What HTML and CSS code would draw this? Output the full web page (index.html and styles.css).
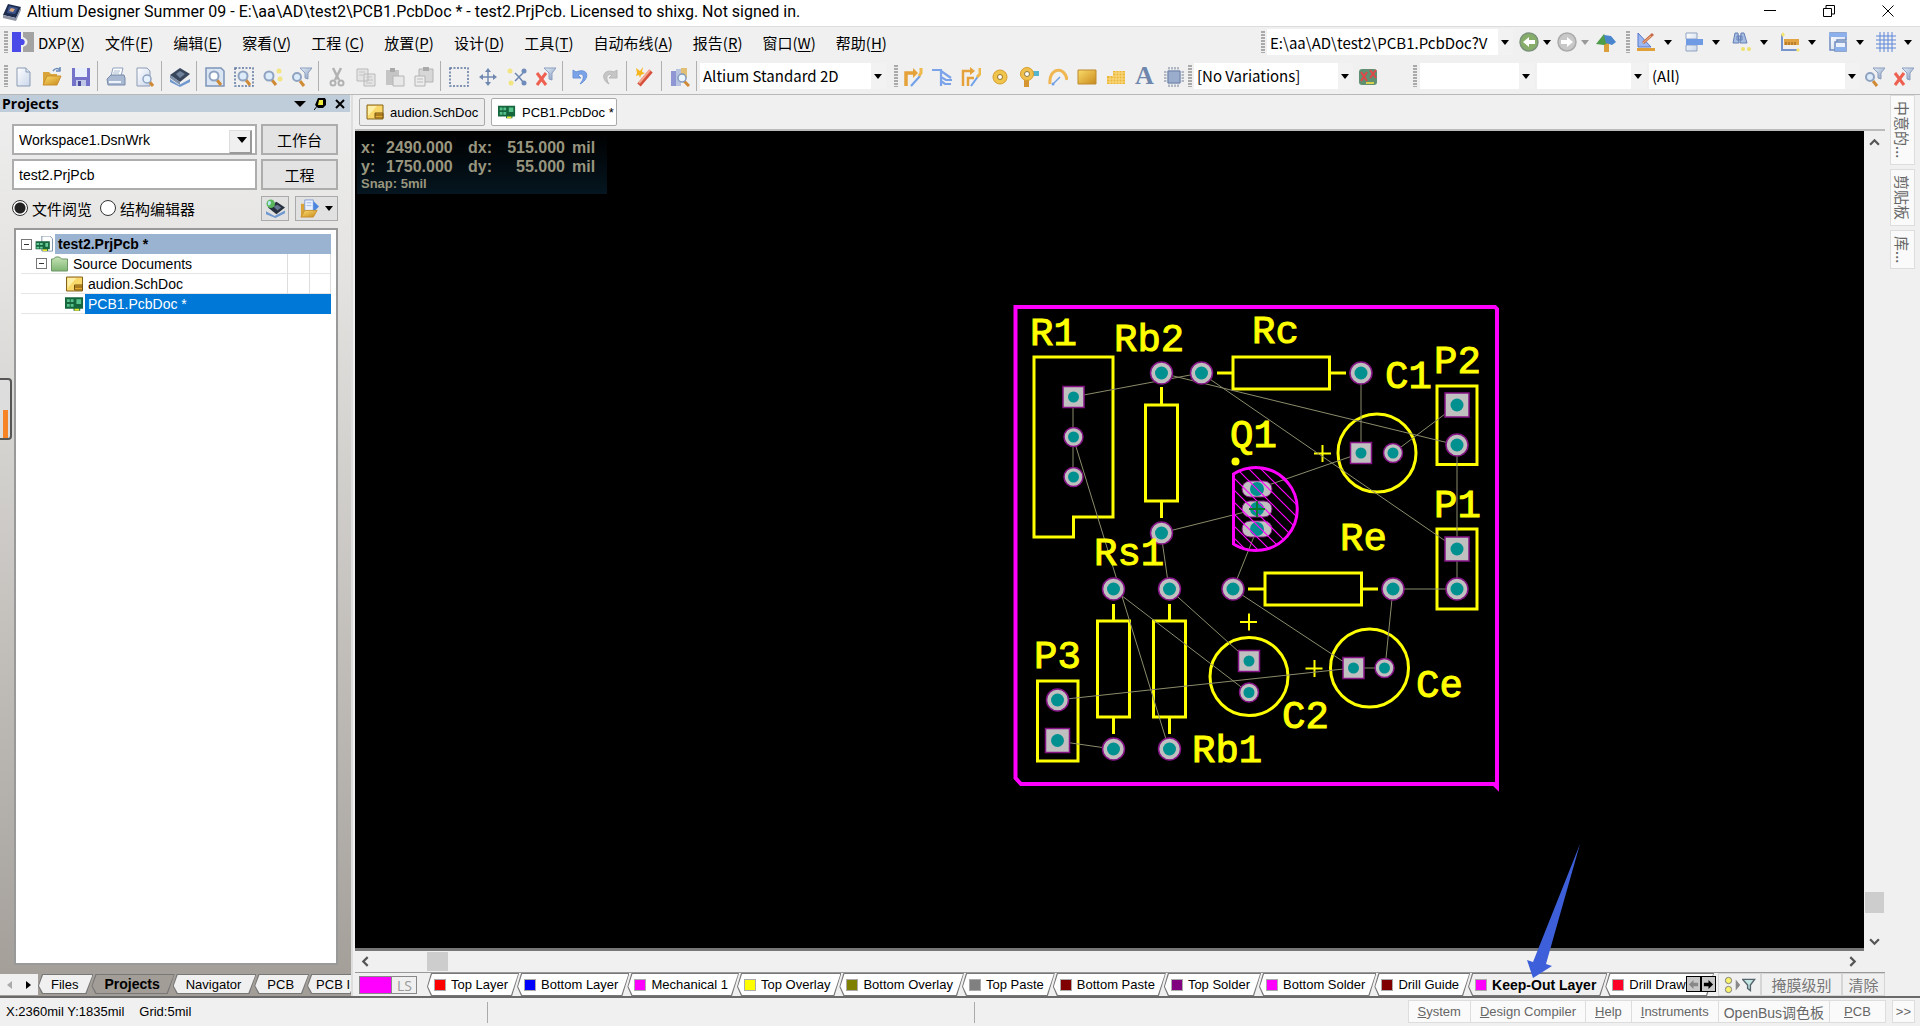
FILE: index.html
```html
<!DOCTYPE html>
<html lang="zh-CN">
  <head>
    <meta charset="UTF-8" />
    <meta name="viewport" content="width=device-width, initial-scale=1.0" />
    <title>Altium Designer Summer 09</title>
    <link rel="stylesheet" href="styles.css">
  </head>
  <body>
    <!-- shared icons -->
    <svg class="sprite" aria-hidden="true">
      <defs>
        <linearGradient id="gold" x2="1" y2="1"><stop offset="0" stop-color="#fbdc6a" /><stop offset="1" stop-color="#c98a1c" /></linearGradient>
        <linearGradient id="steel" x2="1" y2="1"><stop offset="0" stop-color="#e8f0fa" /><stop offset="1" stop-color="#8299bd" /></linearGradient>
        <linearGradient id="paper" x2="1" y2="1"><stop offset="0" stop-color="#fff" /><stop offset="1" stop-color="#c9d6ea" /></linearGradient>
        <linearGradient id="leaf" x2="0" y2="1"><stop offset="0" stop-color="#c5e3b4" /><stop offset="1" stop-color="#7fb573" /></linearGradient>
      </defs>
      <symbol id="i-app" viewBox="0 0 20 20"><path d="M1 13 6 2l13 3-5 11z" fill="#1e2c50" /><path d="m7 4 9 2-3 6-8-1z" fill="#3e568c" /><path d="m9 6 4 1-2 3-4-1z" fill="#dba982" /><path d="m1 13 13 3 5-11v3l-5 11L1 16z" fill="#8d93a3" /></symbol>
      <symbol id="i-dxp" viewBox="0 0 22 20"><path d="M0 0h9v7c5-1 5 7 0 6v7H0z" fill="#4a4ae8" /><path d="M11 0h11v20H11v-5c6-2 6-8 0-10z" fill="#a3a3a3" /></symbol>
      <symbol id="i-new" viewBox="0 0 20 20"><path d="M4 1h9l4 4v14H4z" fill="url(#paper)" stroke="#8b9ab3" /><path d="M13 1v4h4" fill="#dfe7f2" stroke="#8b9ab3" /></symbol>
      <symbol id="i-open" viewBox="0 0 20 20"><path d="M1 5h6l2 2h6v11H1z" fill="#d9a53a" /><path d="m1 18 4-9h14l-4 9z" fill="url(#gold)" stroke="#c98f2c" /><path d="M11 4c2-3 5-3 7-1V0m0 4h-4" fill="none" stroke="#6687b8" stroke-width="1.5" /></symbol>
      <symbol id="i-docs" viewBox="0 0 20 20"><path d="M1 5h5v14H1z" fill="#d9a53a" /><path d="M5 1h9v12H5z" fill="#eaf2ff" stroke="#7f9fd6" /><path d="M7 4h5M7 7h5" stroke="#9bb6e6" /><path d="m14 2 6 6-6 6z" fill="#4a86e0" /><path d="m1 19 4-7h13l-4 7z" fill="url(#gold)" stroke="#c98f2c" /></symbol>
      <symbol id="i-save" viewBox="0 0 20 20"><path d="M1 1h18v18H1z" fill="#7473c9" /><path d="M4 1h12v9H4z" fill="#e8eefb" /><path d="M5 13h10v6H5z" fill="#bfc7e6" /><path d="M7 14h3v5H7z" fill="#4d4c9d" /></symbol>
      <symbol id="i-print" viewBox="0 0 20 20"><path d="m5 9 2-8h10l-2 8z" fill="#fff" stroke="#8da0bf" /><path d="m1 12 4-4h13l1 3v7H2z" fill="#a9b9d2" stroke="#7588a7" /><path d="M3 14h12v2H3z" fill="#eef3fa" /><path d="M8 4h6M7 6h6" stroke="#a9b9d2" /></symbol>
      <symbol id="i-preview" viewBox="0 0 20 20"><path d="M2 1h10l3 3v15H2z" fill="url(#paper)" stroke="#8b9ab3" /><path d="m14 14 4 5" stroke="#d08a34" stroke-width="3" /><circle cx="12" cy="12" r="4" fill="#e5f1fc" stroke="#8fa3c1" stroke-width="1.5" /></symbol>
      <symbol id="i-device" viewBox="0 0 20 20"><path d="m0 12 9 6 11-6v3l-10 5-10-5z" fill="#6f98cf" /><path d="m0 8 10-7 10 6-10 8z" fill="#38475c" /><path d="m6 7 4-3 5 3-5 4z" fill="#71839c" /><path d="m0 8 10 7v3L0 11z" fill="#7d8ea8" /></symbol>
      <symbol id="i-compile" viewBox="0 0 20 20"><path d="m0 13 9 5 11-6v3l-10 5-10-4z" fill="#6f98cf" /><path d="m2 9 9-6 9 6-9 7z" fill="#26303f" /><path d="m8 8 4-2 4 3-4 3z" fill="#66778f" /><circle cx="5" cy="5" r="4.500" fill="#5cb65c" /><path d="M2 3c2-2 4 0 3 2s-2 2-3 1z" fill="#b6e6f5" /></symbol>
      <symbol id="i-fit" viewBox="0 0 20 20"><path d="M1 1h15l3 3v15H1z" fill="#dbe6f5" stroke="#7e94b8" stroke-width="1.5" /><path d="m12 13 4 5" stroke="#d08a34" stroke-width="3" /><circle cx="9" cy="9" r="4.500" fill="#fff" stroke="#8fa3c1" stroke-width="2" /></symbol>
      <symbol id="i-area" viewBox="0 0 20 20"><path d="M1 1h18v18H1z" fill="none" stroke="#5c749e" stroke-width="1.500" stroke-dasharray="2 1.500" /><path d="m12 13 4 5" stroke="#d08a34" stroke-width="3" /><circle cx="9" cy="9" r="4.500" fill="#dcecfb" stroke="#8fa3c1" stroke-width="2" /></symbol>
      <symbol id="i-zoomsel" viewBox="0 0 20 20"><path d="m9 13 4 5" stroke="#d08a34" stroke-width="3" /><circle cx="6" cy="9" r="4.500" fill="#dcecfb" stroke="#8fa3c1" stroke-width="2" /><circle cx="16" cy="4" r="2.500" fill="#f3e482" /><circle cx="17" cy="12" r="2.500" fill="#f3e482" /></symbol>
      <symbol id="i-zoomfilter" viewBox="0 0 20 20"><path d="m8 14 4 5" stroke="#d08a34" stroke-width="3" /><circle cx="5" cy="10" r="4" fill="#dcecfb" stroke="#8fa3c1" stroke-width="2" /><path d="M8 1h12l-4 5v6l-3-1V6z" fill="url(#steel)" stroke="#8c9fbe" /></symbol>
      <symbol id="i-cut" viewBox="0 0 20 20"><path d="m6 1 6 12M14 1 8 13" stroke="#b2b2b2" stroke-width="2.500" /><circle cx="6" cy="16" r="2.500" fill="none" stroke="#b2b2b2" stroke-width="2" /><circle cx="14" cy="16" r="2.500" fill="none" stroke="#b2b2b2" stroke-width="2" /></symbol>
      <symbol id="i-copy" viewBox="0 0 20 20"><path d="M1 2h11v12H1zM8 7h11v12H8z" fill="#e4e4e4" stroke="#bababa" /><path d="M3 5h6M3 8h4M10 10h6M10 13h7M10 16h6" stroke="#c4c4c4" /></symbol>
      <symbol id="i-paste" viewBox="0 0 20 20"><path d="M1 3h13v15H1z" fill="#c5c5c5" /><path d="M5 1h5v4H5z" fill="#a9a9a9" /><path d="M8 9h11v10H8z" fill="#e8e8e8" stroke="#b5b5b5" /></symbol>
      <symbol id="i-pastearr" viewBox="0 0 20 20"><path d="M5 2h14v13H5z" fill="#d7d7d7" stroke="#b4b4b4" /><path d="M9 0h6v4H9z" fill="#aaa" /><path d="M1 9h10v10H1z" fill="#ececec" stroke="#b4b4b4" /><path d="M3 12h6M3 15h6" stroke="#bbb" /></symbol>
      <symbol id="i-marquee" viewBox="0 0 20 20"><path d="M1 1h18v18H1z" fill="none" stroke="#5c749e" stroke-width="1.500" stroke-dasharray="2 1.500" /></symbol>
      <symbol id="i-move" viewBox="0 0 20 20"><path d="M10 3v14M3 10h14" stroke="#7088b0" stroke-width="1.500" /><path d="m10 1 3 4H7zM10 19l3-4H7zM1 10l4-3v6zM19 10l-4-3v6z" fill="#7088b0" /></symbol>
      <symbol id="i-nodes" viewBox="0 0 20 20"><path d="m8 6 4 4-4 4M16 6l-4 4 4 5" fill="none" stroke="#6c86b0" stroke-width="1.500" /><circle cx="3" cy="4" r="2.500" fill="#f3e482" /><circle cx="4" cy="16" r="2.500" fill="#f3e482" /><circle cx="17" cy="4" r="2.500" fill="#6f8cba" /><circle cx="17" cy="16" r="2.500" fill="#6f8cba" /></symbol>
      <symbol id="i-clear" viewBox="0 0 20 20"><path d="M8 1h12l-4 5v7l-3-1V6z" fill="url(#steel)" stroke="#8c9fbe" /><path d="m1 6 9 12M10 6 1 18" stroke="#ee6151" stroke-width="3" /></symbol>
      <symbol id="i-undo" viewBox="0 0 20 20"><path d="M2 3v8h8L7 8c5-3 8 2 2 9 10-5 9-17-4-12z" fill="#7ba3ea" stroke="#6a92d8" /></symbol>
      <symbol id="i-redo" viewBox="0 0 20 20"><path d="M17 3v8H9l3-3c-5-2-7 3-3 9C0 12 3 1 14 5z" fill="#c6c6c6" stroke="#b7b7b7" /></symbol>
      <symbol id="i-brush" viewBox="0 0 20 20"><path d="M4 18 16 4" stroke="#d6503c" stroke-width="4.500" /><path d="m4 16 11-13" stroke="#f3a88f" stroke-width="2" /><path d="m1 1 4 3 3-4-1 5 3 1-4 2-1 3-1-3-3 1 1-3z" fill="#f5b51f" /></symbol>
      <symbol id="i-browse" viewBox="0 0 20 20"><path d="M1 4h5v15H1z" fill="#8e97d4" /><path d="M6 2h5v17H6z" fill="#b8c3df" /><path d="M11 1h6v10h-6z" fill="#e1c075" /><path d="m14 14 5 5" stroke="#d08a34" stroke-width="3" /><circle cx="12" cy="11" r="4" fill="#eaf5ff" stroke="#8199bf" stroke-width="1.500" /></symbol>
      <symbol id="i-route" viewBox="0 0 20 20"><path d="M3 19V6h8" fill="none" stroke="#e5a23a" stroke-width="3.500" /><path d="m10 1 5 5-5 5z" fill="#e5a23a" /><path d="m8 19 9-10" stroke="#6fa0e8" stroke-width="2" /><path d="M18 1v5l-2 3" fill="none" stroke="#f0b94c" stroke-width="3" /></symbol>
      <symbol id="i-bus" viewBox="0 0 20 20"><path d="M0 3h9v16M9 4l10 7M9 10l5 3h6M9 14l4 3h6" fill="none" stroke="#7ba3ea" stroke-width="2.200" /></symbol>
      <symbol id="i-diff" viewBox="0 0 20 20"><path d="M2 19V4h9M7 19v-8h6" fill="none" stroke="#e5a23a" stroke-width="2.500" /><path d="m9 0 5 4-5 4z" fill="#e5a23a" /><path d="m10 19 8-11" stroke="#6fa0e8" stroke-width="2" /><path d="M19 1v6l-3 3" fill="none" stroke="#f0b94c" stroke-width="3" /></symbol>
      <symbol id="i-pad" viewBox="0 0 20 20"><circle cx="10" cy="10" r="7" fill="#efc64b" stroke="#d69c2b" /><circle cx="10" cy="10" r="2.500" fill="#fff" stroke="#9a7224" /></symbol>
      <symbol id="i-via" viewBox="0 0 20 20"><path d="M5 10h5v10H5z" fill="#d59531" /><path d="M12 4h8v5h-8z" fill="#53b6cc" /><circle cx="8" cy="7" r="6.500" fill="#efc04b" stroke="#d69c2b" /><circle cx="8" cy="7" r="2.500" fill="#fff" stroke="#8d7740" /></symbol>
      <symbol id="i-arc" viewBox="0 0 20 20"><path d="M2 17C0 1 17-2 19 13" fill="none" stroke="#efb652" stroke-width="3" /><path d="m5 17 7-7" stroke="#6fa0e8" stroke-width="1.500" /><circle cx="5" cy="17" r="1.500" fill="#6fa0e8" /></symbol>
      <symbol id="i-fill" viewBox="0 0 20 20"><path d="M1 3h18v14H1z" fill="url(#gold)" stroke="#bd8a31" /></symbol>
      <symbol id="i-poly" viewBox="0 0 20 20"><path d="M1 9h6V4h12v13H1z" fill="#ebb63c" /><path d="M1 12h18M1 15h18M7 9h12M7 6h12M4 9v8M7 9v8M10 4v13M13 4v13M16 4v13" stroke="#fadb82" /></symbol>
      <symbol id="i-chip" viewBox="0 0 20 20"><path d="M5 0v20M8 0v20M11 0v20M14 0v20M0 5h20M0 8h20M0 11h20M0 14h20" stroke="#727f96" /><path d="M3 3h14v14H3z" fill="#9badcc" stroke="#f0f0f0" /><path d="M4 4h12v12H4z" fill="none" stroke="#6c80a5" /></symbol>
      <symbol id="i-board" viewBox="0 0 20 16"><path d="M0 1h19v12h-3v2H9v-2H0z" fill="#15663c" /><path d="M2 3h3v3H2zM6 3h3v3H6zM2 8h3v3H2zM6 8h3v3H6zM12 3h5v5h-5z" fill="#57c08b" /><path d="M10 13h5v2h-5z" fill="#eae62d" /></symbol>
      <symbol id="i-sch" viewBox="0 0 18 16"><path d="M1 1h16v14H1z" fill="#f9d768" stroke="#86631b" /><path d="M2 2h9L2 12z" fill="#fdf0a6" /><path d="M9 9h8v5H9zM9 11h8" fill="#e6a92f" stroke="#71510f" /></symbol>
      <symbol id="i-variant" viewBox="0 0 20 20"><rect x="1" y="2" width="18" height="16" rx="3" fill="#5f9072" /><path d="m3 5 6 9M9 5 3 14M12 3l6 8M18 3l-6 8" stroke="#e04747" stroke-width="2" /><path d="M8 16h8" stroke="#d9d04f" stroke-width="2" /></symbol>
      <symbol id="i-back" viewBox="0 0 20 20"><circle cx="10" cy="10" r="9" fill="#86ad69" stroke="#7b937a" stroke-width="1.500" /><path d="m4 10 6-5v3h6v4h-6v3z" fill="#fff" /></symbol>
      <symbol id="i-fwd" viewBox="0 0 20 20"><circle cx="10" cy="10" r="9" fill="#c8c8c8" stroke="#aaa" stroke-width="1.500" /><path d="m16 10-6-5v3H4v4h6v3z" fill="#fff" /></symbol>
      <symbol id="i-up" viewBox="0 0 20 20"><path d="M8 7h5v12H8z" fill="#d9a03c" /><path d="m0 11 8-10 5 8-5 3z" fill="#4f9d4b" /><path d="m8 2 7 1 5 6-4 3-6-2z" fill="#4a86cd" /></symbol>
      <symbol id="i-draw" viewBox="0 0 20 20"><path d="M1 16h18v3H1z" fill="#e0a038" /><path d="M2 1v14h13z" fill="#9db8ee" stroke="#5577ca" /><path d="m7 11 10-9" stroke="#ca6a4a" stroke-width="3" /><path d="m7 11 8-7" stroke="#f0c080" /></symbol>
      <symbol id="i-align" viewBox="0 0 20 20"><path d="M2 1h11v6H2zM2 13h11v6H2z" fill="url(#paper)" stroke="#8fa3c1" /><path d="M2 7h17v6H2z" fill="#6f9ae4" /></symbol>
      <symbol id="i-find" viewBox="0 0 20 20"><path d="M3 1h3l1 10H1zM9 1h3l3 10H8zM5 4h5v4H5z" fill="#a8bde3" stroke="#6480b4" /><circle cx="11" cy="17" r="2" fill="#efe06d" /><circle cx="17" cy="17" r="2" fill="#efe06d" /></symbol>
      <symbol id="i-dim" viewBox="0 0 20 20"><path d="M2 2v16h17" fill="none" stroke="#7795cc" stroke-width="2" /><path d="M4 7h15v6H4z" fill="#e2a344" /><path d="M6 10v3M9 10v3M12 10v3M15 10v3" stroke="#915e17" /><path d="m3 0 2 3-2 2-2-2zM18 16l2 2-2 2-2-2z" fill="#f5e46e" /></symbol>
      <symbol id="i-room" viewBox="0 0 20 20"><path d="M2 1h16v7H9v10H2z" fill="url(#paper)" stroke="#6f8cc0" stroke-width="1.500" /><path d="M1 1h18v4H1z" fill="#8cb0ec" /><path d="M7 10h11v9H7z" fill="#eaf1fc" stroke="#6f8cc0" stroke-width="1.500" /><path d="M7 15h11v4H7z" fill="#8cb0ec" /></symbol>
      <symbol id="i-grid" viewBox="0 0 20 20"><path d="M4 0v20M8 0v20M12 0v20M16 0v20M0 4h20M0 8h20M0 12h20M0 16h20" stroke="#5c86d8" /></symbol>
      <symbol id="i-funnel" viewBox="0 0 20 20"><path d="M1 2h17l-6 8v8l-4-3v-5z" fill="#c1e5e0" stroke="#55646c" stroke-width="2" /></symbol>
      <symbol id="i-folder" viewBox="0 0 18 16"><path d="M1 3h2l2-2h4l2 2h6v12H1z" fill="url(#leaf)" stroke="#6d9566" /></symbol>
      <symbol id="i-project" viewBox="0 0 20 18"><path d="M7 0h9l3 3v14H7z" fill="#fff" stroke="#7788a3" /><path d="M0 6h16v9h-2v2H8v-2H0z" fill="#15663c" /><path d="M1 8h3v2H1zM5 8h3v2H5zM1 12h3v2H1zM5 12h3v2H5zM11 8h3v4h-3z" fill="#6acb9a" /><path d="M8 15h5v2H8z" fill="#eae62d" /></symbol>
    </svg>

    <header class="titlebar">
      <svg class="app-icon"><use href="#i-app" /></svg>
      <h1>Altium Designer Summer 09 - E:\aa\AD\test2\PCB1.PcbDoc * - test2.PrjPcb. Licensed to shixg. Not signed in.</h1>
      <div class="window-buttons">
        <button aria-label="Minimize"><svg viewBox="0 0 12 12"><path d="M0 5.500h12" /></svg></button>
        <button aria-label="Restore"><svg viewBox="0 0 12 12"><path d="M.5 3.500h8v8h-8zM3 3V.5h8.500V9H9" /></svg></button>
        <button aria-label="Close"><svg viewBox="0 0 12 12"><path d="m.5.5 11 11M11.500.5l-11 11" /></svg></button>
      </div>
    </header>

    <div class="menubar">
      <i class="grip"></i>
      <nav class="menu">
        <button><svg class="dxp"><use href="#i-dxp" /></svg>DXP(<u>X</u>)</button>
        <button>文件(<u>F</u>)</button>
        <button>编辑(<u>E</u>)</button>
        <button>察看(<u>V</u>)</button>
        <button>工程 (<u>C</u>)</button>
        <button>放置(<u>P</u>)</button>
        <button>设计(<u>D</u>)</button>
        <button>工具(<u>T</u>)</button>
        <button>自动布线(<u>A</u>)</button>
        <button>报告(<u>R</u>)</button>
        <button>窗口(<u>W</u>)</button>
        <button>帮助(<u>H</u>)</button>
      </nav>
      <div class="nav-tools">
        <i class="grip"></i>
        <span class="combo address"><select aria-label="Address"><option>E:\aa\AD\test2\PCB1.PcbDoc?V</option></select></span>
        <button class="drop near" aria-label="Back"><svg><use href="#i-back" /></svg></button>
        <button class="drop near off" aria-label="Forward"><svg><use href="#i-fwd" /></svg></button>
        <button class="tool" aria-label="Up"><svg><use href="#i-up" /></svg></button>
        <i class="grip"></i>
        <button class="drop" aria-label="Draw"><svg><use href="#i-draw" /></svg></button>
        <button class="drop" aria-label="Align"><svg><use href="#i-align" /></svg></button>
        <button class="drop" aria-label="Find"><svg><use href="#i-find" /></svg></button>
        <button class="drop" aria-label="Dimension"><svg><use href="#i-dim" /></svg></button>
        <button class="drop" aria-label="Room"><svg><use href="#i-room" /></svg></button>
        <button class="drop" aria-label="Grid"><svg><use href="#i-grid" /></svg></button>
      </div>
    </div>

    <div class="toolbar">
      <i class="grip"></i>
      <button class="tool" aria-label="New"><svg><use href="#i-new" /></svg></button>
      <button class="tool" aria-label="Open"><svg><use href="#i-open" /></svg></button>
      <button class="tool" aria-label="Save"><svg><use href="#i-save" /></svg></button>
      <i class="sep"></i>
      <button class="tool" aria-label="Print"><svg><use href="#i-print" /></svg></button>
      <button class="tool" aria-label="Preview"><svg><use href="#i-preview" /></svg></button>
      <i class="sep"></i>
      <button class="tool" aria-label="Devices"><svg><use href="#i-device" /></svg></button>
      <i class="sep"></i>
      <button class="tool" aria-label="Fit document"><svg><use href="#i-fit" /></svg></button>
      <button class="tool" aria-label="Fit area"><svg><use href="#i-area" /></svg></button>
      <button class="tool" aria-label="Zoom selected"><svg><use href="#i-zoomsel" /></svg></button>
      <button class="tool" aria-label="Zoom filtered"><svg><use href="#i-zoomfilter" /></svg></button>
      <i class="sep"></i>
      <button class="tool" aria-label="Cut"><svg><use href="#i-cut" /></svg></button>
      <button class="tool" aria-label="Copy"><svg><use href="#i-copy" /></svg></button>
      <button class="tool" aria-label="Paste"><svg><use href="#i-paste" /></svg></button>
      <button class="tool" aria-label="Paste array"><svg><use href="#i-pastearr" /></svg></button>
      <i class="sep"></i>
      <button class="tool" aria-label="Select"><svg><use href="#i-marquee" /></svg></button>
      <button class="tool" aria-label="Move"><svg><use href="#i-move" /></svg></button>
      <button class="tool" aria-label="Deselect"><svg><use href="#i-nodes" /></svg></button>
      <button class="tool" aria-label="Clear filter"><svg><use href="#i-clear" /></svg></button>
      <i class="sep"></i>
      <button class="tool" aria-label="Undo"><svg><use href="#i-undo" /></svg></button>
      <button class="tool" aria-label="Redo"><svg><use href="#i-redo" /></svg></button>
      <i class="sep"></i>
      <button class="tool" aria-label="Cross probe"><svg><use href="#i-brush" /></svg></button>
      <i class="sep"></i>
      <button class="tool" aria-label="Browse"><svg><use href="#i-browse" /></svg></button>
      <i class="sep"></i>
      <span class="combo view"><select aria-label="View configuration"><option>Altium Standard 2D</option></select></span>
      <i class="grip"></i>
      <button class="tool" aria-label="Route"><svg><use href="#i-route" /></svg></button>
      <button class="tool" aria-label="Multi route"><svg><use href="#i-bus" /></svg></button>
      <button class="tool" aria-label="Differential pair"><svg><use href="#i-diff" /></svg></button>
      <button class="tool" aria-label="Pad"><svg><use href="#i-pad" /></svg></button>
      <button class="tool" aria-label="Via"><svg><use href="#i-via" /></svg></button>
      <button class="tool" aria-label="Arc"><svg><use href="#i-arc" /></svg></button>
      <button class="tool" aria-label="Fill"><svg><use href="#i-fill" /></svg></button>
      <button class="tool" aria-label="Polygon"><svg><use href="#i-poly" /></svg></button>
      <button class="tool letter" aria-label="String">A</button>
      <button class="tool" aria-label="Component"><svg><use href="#i-chip" /></svg></button>
      <i class="grip"></i>
      <span class="combo variations"><select aria-label="Variations"><option>[No Variations]</option></select></span>
      <button class="tool variant" aria-label="Variant"><svg><use href="#i-variant" /></svg></button>
      <i class="grip"></i>
      <span class="combo short"><select aria-label="Net"><option></option></select></span>
      <span class="combo short"><select aria-label="Component"><option></option></select></span>
      <span class="combo filter"><select aria-label="Filter"><option>(All)</option></select></span>
      <button class="tool" aria-label="Apply filter"><svg><use href="#i-zoomfilter" /></svg></button>
      <button class="tool" aria-label="Clear"><svg><use href="#i-clear" /></svg></button>
    </div>

    <div class="workspace">
      <aside class="projects">
        <div class="panel-head">
          <h2>Projects</h2>
          <button aria-label="Panel menu"><svg viewBox="0 0 12 12"><path d="M0 3h12L6 9z" /></svg></button>
          <button aria-label="Pin"><svg viewBox="0 0 12 12"><path d="M4 0h7l1 2v5l-3 3H4L1 7z" /><path d="M5 2h4v5H4z" fill="#f1e93d" /><path d="m0 12 4-5" stroke="#000" /></svg></button>
          <button aria-label="Close panel"><svg viewBox="0 0 12 12"><path d="m2 2 8 8M10 2l-8 8" stroke="#000" stroke-width="2" /></svg></button>
        </div>
        <form class="panel-form">
          <span class="combo raised"><select aria-label="Workspace"><option>Workspace1.DsnWrk</option></select></span>
          <button type="button">工作台</button>
          <input type="text" value="test2.PrjPcb" aria-label="Project" />
          <button type="button">工程</button>
          <div class="views">
            <input type="radio" name="view" id="fileView" checked /><label for="fileView">文件阅览</label>
            <input type="radio" name="view" id="structView" /><label for="structView">结构编辑器</label>
          </div>
          <div class="small-buttons">
            <button type="button" aria-label="Compile"><svg><use href="#i-compile" /></svg></button>
            <button type="button" class="split" aria-label="Documents"><svg><use href="#i-docs" /></svg></button>
          </div>
        </form>
        <ul class="tree">
          <li class="root"><i class="minus"></i><svg><use href="#i-project" /></svg><span>test2.PrjPcb *</span></li>
          <li class="level1"><i class="minus"></i><svg><use href="#i-folder" /></svg><span>Source Documents</span><b></b><b></b></li>
          <li class="level2"><svg><use href="#i-sch" /></svg><span>audion.SchDoc</span><b></b><b></b></li>
          <li class="level2 selected"><svg><use href="#i-board" /></svg><span>PCB1.PcbDoc *</span></li>
        </ul>
        <div class="panel-tabs">
          <button class="step off" aria-label="Previous"></button>
          <button class="step" aria-label="Next"></button>
          <button class="tab">Files</button>
          <button class="tab active">Projects</button>
          <button class="tab">Navigator</button>
          <button class="tab">PCB</button>
          <button class="tab">PCB I</button>
        </div>
        <div class="edge-handle"></div>
      </aside>

      <main class="editor">
        <div class="doc-tabs">
          <button><svg><use href="#i-sch" /></svg>audion.SchDoc</button>
          <button class="active"><svg><use href="#i-board" /></svg>PCB1.PcbDoc *</button>
        </div>
        <div class="canvas-row">
          <div class="canvas">
            <svg class="board" viewBox="355 131 1509 817" preserveAspectRatio="xMinYMin slice">
              <defs>
                <pattern id="hatch" width="12" height="12" patternUnits="userSpaceOnUse"><path d="m-1-1 14 14M-1 11l2 2M11-1l2 2" stroke="#f0f" stroke-width="1.200" /></pattern>
                <g id="round"><circle r="11" fill="#c0c0c0" stroke="#861386" stroke-width="1.500" /><circle r="6.500" fill="#009090" /></g>
                <g id="small"><circle r="9.500" fill="#c0c0c0" stroke="#861386" stroke-width="1.500" /><circle r="5.500" fill="#009090" /></g>
                <g id="square"><path d="M-10.500-10.500h21v21h-21z" fill="#c0c0c0" stroke="#861386" stroke-width="1.500" /><circle r="5.500" fill="#009090" /></g>
                <g id="bigsquare"><path d="M-12-12h24v24h-24z" fill="#c0c0c0" stroke="#861386" stroke-width="1.500" /><circle r="6.500" fill="#009090" /></g>
                <g id="pill"><rect x="-15" y="-8" width="30" height="16" rx="8" fill="#c0c0c0" stroke="#861386" /><circle r="7" fill="#009090" /></g>
              </defs>

              <!-- keep-out outline -->
              <path class="keepout" d="M1015.500 307H1495l2 2v478l-3-3H1021l-5.500-6z" />

              <!-- component outlines -->
              <g class="overlay">
                <path d="M1034 357h79v160h-39.500v20H1034z" />
                <path d="M1145.500 405h32v96h-32zM1161.500 387v18M1161.500 501v17" />
                <path d="M1233 357h96.500v32H1233zM1217 373h16M1329 373h17" />
                <path d="M1265 573h96.500v32H1265zM1248 589h17M1361 589h17" />
                <path d="M1097.500 621h32v96h-32zM1113.500 604v17M1113.500 717v17" />
                <path d="M1153.500 621h32v96h-32zM1169.500 604v17M1169.500 717v17" />
                <path d="M1437 386h40v78.500h-40zM1437 529h40v80h-40zM1037.500 681h40.500v80h-40.500z" />
                <circle cx="1377" cy="453" r="39" /><circle cx="1249" cy="676.500" r="39" /><circle cx="1369.500" cy="668" r="39" />
                <path class="thin" d="M1314 453.500h17M1322.500 445v17M1240 622h17M1249 613.500v17M1305.500 668.500h17M1314.500 660v17" />
                <circle class="dot" cx="1235.500" cy="461.500" r="4" />
              </g>

              <!-- ratsnest -->
              <path class="nets" d="M1073 397l128-24M1161 373l296 72M1073 397v80M1073 437l96 312M1201 373l256 176M1361 373v80M1393 453l64-48M1257 489l104-36M1457 445v144M1161 533l96-24M1161 533l8 56M1257 529l-24 60M1113 589l136 104M1169 589l80 72M1233 589l120 79M1393 589h64M1393 589l-8 79M1353 668h32M1057 700l296-32M1057 741l56 8" />

              <g>
                <use href="#square" x="1073.500" y="397" /><use href="#small" x="1073.500" y="437" /><use href="#small" x="1073.500" y="477" />
                <use href="#round" x="1161.500" y="373" /><use href="#round" x="1161.500" y="533" />
                <use href="#round" x="1201.500" y="373" /><use href="#round" x="1361" y="373" />
                <use href="#square" x="1361" y="453" /><use href="#small" x="1393" y="453" />
                <use href="#bigsquare" x="1457" y="405" /><use href="#round" x="1457" y="445" />
                <use href="#bigsquare" x="1457" y="549" /><use href="#round" x="1457" y="589" />
                <use href="#round" x="1233" y="589" /><use href="#round" x="1393" y="589" />
                <use href="#round" x="1113.500" y="589" /><use href="#round" x="1113.500" y="749" />
                <use href="#round" x="1169.500" y="589" /><use href="#round" x="1169.500" y="749" />
                <use href="#round" x="1057.500" y="700" /><use href="#bigsquare" x="1057.500" y="740.500" />
                <use href="#square" x="1249" y="661" /><use href="#small" x="1249" y="692.500" />
                <use href="#square" x="1353.500" y="668" /><use href="#small" x="1384.500" y="668" />
                <use href="#pill" x="1257" y="489" /><use href="#pill" x="1257" y="509" /><use href="#pill" x="1257" y="529" />
              </g>
              <path d="M1233.500 474v70A41.500 41.500 0 1 0 1233.500 474z" fill="url(#hatch)" stroke="#f0f" stroke-width="3" />
              <path d="M1249 509h16M1257 501v16" stroke="#0a7a2c" stroke-width="2" />

              <g class="designators">
                <text x="1030" y="345">R1</text>
                <text x="1114" y="351">Rb2</text>
                <text x="1252" y="343">Rc</text>
                <text x="1385" y="388">C1</text>
                <text x="1434" y="373">P2</text>
                <text x="1230" y="447">Q1</text>
                <text x="1434" y="517">P1</text>
                <text x="1340" y="550">Re</text>
                <text x="1094" y="565">Rs1</text>
                <text x="1034" y="668">P3</text>
                <text x="1282" y="728">C2</text>
                <text x="1416" y="697">Ce</text>
                <text x="1192" y="762">Rb1</text>
              </g>
            </svg>
            <div class="hud">
              <span>x:</span><span>2490.000</span><span>dx:</span><span class="num">515.000</span><span>mil</span>
              <span>y:</span><span>1750.000</span><span>dy:</span><span class="num">55.000</span><span>mil</span>
              <small>Snap: 5mil</small>
            </div>
          </div>
          <div class="vscroll">
            <svg viewBox="0 0 10 10"><path d="m1 7 4-4 4 4" /></svg>
            <i></i>
            <svg viewBox="0 0 10 10"><path d="m1 3 4 4 4-4" /></svg>
          </div>
        </div>
        <div class="hscroll">
          <svg viewBox="0 0 10 10"><path d="M7 1 3 5l4 4" /></svg>
          <i></i>
          <svg viewBox="0 0 10 10"><path d="m3 1 4 4-4 4" /></svg>
        </div>
        <div class="layer-bar">
          <button class="layer-set"><i></i>LS</button>
          <div class="layers">
            <button class="tab"><i class="red"></i>Top Layer</button>
            <button class="tab"><i class="blue"></i>Bottom Layer</button>
            <button class="tab"><i class="magenta"></i>Mechanical 1</button>
            <button class="tab"><i class="yellow"></i>Top Overlay</button>
            <button class="tab"><i class="olive"></i>Bottom Overlay</button>
            <button class="tab"><i class="gray"></i>Top Paste</button>
            <button class="tab"><i class="maroon"></i>Bottom Paste</button>
            <button class="tab"><i class="purple"></i>Top Solder</button>
            <button class="tab"><i class="magenta"></i>Bottom Solder</button>
            <button class="tab"><i class="maroon"></i>Drill Guide</button>
            <button class="tab active"><i class="magenta"></i>Keep-Out Layer</button>
            <button class="tab"><i class="crimson"></i>Drill Drawing</button>
            <div class="layer-steps">
              <button aria-label="Scroll left" disabled><svg viewBox="0 0 12 12"><path d="m1 6 5-5v3h5v4H6v3z" /></svg></button>
              <button aria-label="Scroll right"><svg viewBox="0 0 12 12"><path d="M11 6 6 1v3H1v4h5v3z" /></svg></button>
            </div>
          </div>
          <button class="mask" aria-label="Mask"><svg class="bulbs" viewBox="0 0 18 20"><path d="M12 4v12l5-6z" fill="#888" /><circle cx="4" cy="5" r="3.500" fill="#f8f36a" stroke="#777" /><circle cx="4" cy="15" r="3.500" fill="#f8f36a" stroke="#777" /></svg><svg class="funnel"><use href="#i-funnel" /></svg></button>
          <button class="mask level">掩膜级别</button>
          <button class="mask">清除</button>
        </div>
        <svg class="pointer" viewBox="0 0 52 136"><path d="M51 1 17 121l6 2L4 135-2 117l6 2z" fill="#3d5fd9" /></svg>
      </main>

      <nav class="side-tabs">
        <button>中意的...</button>
        <button>剪贴板</button>
        <button>库...</button>
      </nav>
    </div>

    <footer class="statusbar">
      <span class="coords">X:2360mil Y:1835mil</span>
      <span class="gridsize">Grid:5mil</span>
      <div class="status-panels">
        <button><u>S</u>ystem</button>
        <button><u>D</u>esign Compiler</button>
        <button><u>H</u>elp</button>
        <button><u>I</u>nstruments</button>
        <button class="openbus">OpenBus调色板</button>
        <button><u>P</u>CB</button>
      </div>
      <button class="more">&gt;&gt;</button>
    </footer>
  </body>
</html>
```

FILE: styles.css
```css
* {
  box-sizing: border-box;
}
body {
  margin: 0;
  height: 100vh;
  display: flex;
  flex-direction: column;
  overflow: hidden;
  background-color: #f0f0f0;
  color: #000;
  font-family: "Liberation Sans", "Noto Sans CJK SC", sans-serif;
  font-size: 14px;
}
button,
input,
select {
  font: inherit;
  color: inherit;
  margin: 0;
}
button {
  background: none;
  border: none;
  padding: 0;
  white-space: nowrap;
}
.sprite {
  position: absolute;
  width: 0;
  height: 0;
}

/* title bar */
.titlebar {
  display: flex;
  align-items: center;
  height: 26px;
  padding-bottom: 2px;
  background-color: #fff;
  flex-shrink: 0;
}
.app-icon {
  width: 20px;
  height: 20px;
  margin: 0 5px 0 2px;
}
h1 {
  margin: 0;
  font-family: Roboto, sans-serif;
  font-size: 16px;
  font-weight: normal;
  line-height: 24px;
}
.window-buttons {
  margin-left: auto;
  padding-right: 3px;
  display: flex;
}
.window-buttons button {
  width: 59px;
}
.window-buttons svg {
  width: 12px;
  height: 12px;
  fill: none;
  stroke: #000;
}

/* menus and toolbars */
.menubar,
.toolbar {
  display: flex;
  align-items: center;
  padding: 0 2px 2px 4px;
  font-family: "Noto Sans CJK SC", sans-serif;
  font-size: 15px;
  flex-shrink: 0;
}
.menubar {
  height: 33px;
  border-top: 1px solid #ddd;
}
.toolbar {
  height: 35px;
}
.grip {
  width: 4px;
  height: 22px;
  flex-shrink: 0;
  background: repeating-linear-gradient(#aaa 0 2px, #f0f0f0 2px 3px);
}
.menu {
  display: flex;
  gap: 20px;
  margin-left: 4px;
}
.menu button {
  display: flex;
  align-items: center;
  white-space: pre;
}
.menu u {
  text-underline-offset: 2px;
}
.dxp {
  width: 22px;
  height: 20px;
  margin-right: 4px;
}
.nav-tools {
  display: flex;
  align-items: center;
  margin-left: auto;
}
.nav-tools .combo {
  margin: 0 6px 0 2px;
}
.tool {
  width: 29px;
  height: 26px;
  flex-shrink: 0;
}
.nav-tools .tool {
  width: 21px;
  margin-right: 10px;
}
.letter {
  color: #6f87ad;
  font-family: "Liberation Serif", serif;
  font-size: 26px;
  font-weight: bold;
  line-height: 26px;
}
.tool svg,
.drop svg {
  width: 20px;
  height: 20px;
  vertical-align: middle;
}
.drop {
  display: flex;
  align-items: center;
  gap: 8px;
  width: 48px;
  padding-left: 6px;
}
.drop.near {
  width: 38px;
  gap: 4px;
  padding-left: 0;
}
.drop::after,
.split::after,
.combo::after {
  content: "";
  border: 4px solid transparent;
  border-top: 5px solid #000;
  border-bottom: 0;
}
.drop.off::after {
  border-top-color: #999;
}
.sep {
  width: 1px;
  height: 30px;
  margin: 0 3px 0 2px;
  background-color: #b0b0b0;
  flex-shrink: 0;
}
.combo {
  position: relative;
  display: block;
  height: 26px;
}
.combo select {
  appearance: none;
  width: 100%;
  height: 100%;
  padding: 0 18px 0 3px;
  border: none;
  border-right: 15px solid #f2f2f2;
  border-radius: 0;
  background-color: #fff;
}
.combo::after {
  position: absolute;
  right: 4px;
  top: 11px;
}
.menubar .combo select {
  padding-right: 0;
}
.address {
  width: 246px;
}
.view {
  width: 186px;
  margin-right: 8px;
}
.variations {
  width: 159px;
  margin-left: 2px;
}
.toolbar .variant {
  margin-right: 31px;
}
.short {
  width: 109px;
  margin-left: 3px;
}
.grip + .short {
  width: 114px;
}
.filter {
  flex: 1;
  margin-left: 3px;
}

/* main area */
.workspace {
  flex: 1;
  min-height: 0;
  display: flex;
  border-top: 1px solid #b8b8b8;
}
.projects {
  position: relative;
  width: 353px;
  flex-shrink: 0;
  display: flex;
  flex-direction: column;
  background: linear-gradient(#efefef, #e4e3e1 20%, #a29d97);
  border-right: 2px solid #ddd;
}
.panel-head {
  display: flex;
  align-items: center;
  gap: 8px;
  height: 17px;
  margin-right: 1px;
  padding: 0 4px 0 2px;
  background-color: #bfcddb;
}
h2 {
  flex: 1;
  margin: 0;
  font-family: "Open Sans", sans-serif;
  font-size: 14px;
  line-height: 17px;
}
.panel-head button {
  display: flex;
}
.panel-head svg {
  width: 12px;
  height: 12px;
}
.panel-form {
  display: grid;
  grid-template-columns: 1fr 77px;
  gap: 4px;
  padding: 12px 13px 0 12px;
}
.panel-form > button,
.panel-form > input,
.raised {
  height: 31px;
  width: 100%;
  border: 2px solid #adadad;
  background-color: #e3e3e3;
}
.panel-form > button {
  font-family: "Noto Sans CJK SC", sans-serif;
  font-size: 15px;
}
.panel-form > input,
.raised {
  background-color: #fff;
}
.panel-form > input {
  padding: 0 5px;
}
.raised select {
  border: none;
  padding-left: 5px;
}
.raised::after {
  right: 3px;
  top: 4px;
  border: 5px solid transparent;
  border-top: 6px solid #000;
  border-bottom: 0;
  margin: 7px 5px;
}
.raised::before {
  content: "";
  position: absolute;
  right: 3px;
  top: 4px;
  width: 20px;
  height: 21px;
  background-color: #f0f0f0;
  border: 1px solid #ddd;
  border-right: 2px solid #999;
  border-bottom: 2px solid #999;
}
.views {
  display: flex;
  align-items: center;
  height: 28px;
  font-family: "Noto Sans CJK SC", sans-serif;
  font-size: 15px;
}
.views input {
  appearance: none;
  width: 16px;
  height: 16px;
  border: 1px solid #333;
  border-radius: 50%;
  background-color: #fff;
  margin-right: 4px;
}
.views input:checked {
  background: radial-gradient(#222 0 5px, #fff 6px);
}
.views label {
  margin-right: 8px;
  white-space: nowrap;
}
.small-buttons {
  display: flex;
  align-items: center;
  gap: 6px;
}
.small-buttons button {
  display: flex;
  align-items: center;
  justify-content: center;
  gap: 6px;
  width: 28px;
  height: 25px;
  border: 1px solid #aaa;
  background-color: #e1e1e1;
}
.small-buttons .split {
  width: 43px;
}
.small-buttons svg {
  width: 19px;
  height: 19px;
}

/* project tree */
.tree {
  flex: 1;
  margin: 6px 13px 9px 14px;
  padding: 4px 5px;
  border: 2px solid #999;
  background-color: #fff;
  list-style: none;
}
.tree li {
  display: flex;
  align-items: center;
  height: 20px;
}
.tree svg {
  width: 19px;
  height: 16px;
  flex-shrink: 0;
}
.tree span {
  flex: 1;
  margin-left: 1px;
  padding-left: 3px;
  line-height: 20px;
}
.tree b {
  width: 22px;
  height: 20px;
  border-left: 1px solid #ddd;
}
.tree b:last-child {
  border-right: 1px solid #ddd;
}
.minus {
  width: 11px;
  height: 11px;
  margin-right: 3px;
  border: 1px solid #777;
  background: linear-gradient(#333, #333) center / 5px 1px no-repeat;
}
.root span {
  background-color: #9ab3d1;
  font-weight: bold;
}
.tree .level1 {
  padding-left: 15px;
}
.level1,
.level2 {
  border-bottom: 1px solid #e5e5e5;
}
.tree .level2 {
  padding-left: 44px;
}
.selected span {
  background-color: #0078d7;
  color: #fff;
}

/* slanted tabs, shared by panels and layers */
.panel-tabs {
  display: flex;
  height: 22px;
  padding-bottom: 1px;
  overflow: hidden;
}
.tab {
  position: relative;
  z-index: 0;
  flex-shrink: 0;
  font-size: 13px;
  padding: 0 11px 0 13px;
  margin-right: -2px;
}
.tab::before,
.tab::after {
  content: "";
  position: absolute;
  z-index: -1;
  inset: 0;
  background-color: #777;
  clip-path: polygon(4px 0, 100% 0, calc(100% - 7px) 100%, 4px 100%, 0 60%);
}
.tab::after {
  inset: 1px;
  background-color: #fff;
}
.tab.active {
  font-size: 14px;
  font-weight: bold;
}
.panel-tabs .tab {
  height: 20px;
  padding: 0 15px 0 13px;
}
.panel-tabs .tab:last-child {
  padding: 0 8px 0 9px;
}
.panel-tabs .tab::after {
  background-color: #f0f0f0;
}
.panel-tabs .active::after {
  background-color: #a29d97;
}
.step {
  width: 19px;
  flex-shrink: 0;
  display: flex;
  align-items: center;
  justify-content: center;
  background-color: #f0f0f0;
}
.step::before {
  content: "";
  border: 4px solid transparent;
  border-left: 5px solid #000;
  border-right: 0;
}
.step.off::before {
  border-left: 0;
  border-right: 5px solid #aaa;
}
.edge-handle {
  position: absolute;
  left: 0;
  top: 283px;
  width: 12px;
  height: 62px;
  border: 2px solid #555;
  border-left: none;
  border-radius: 0 4px 4px 0;
  background: linear-gradient(#ddd 0 30px, #f68426 30px) 3px 0 / 5px 100% no-repeat #ddd;
}

/* editor */
.editor {
  position: relative;
  flex: 1;
  min-width: 0;
  display: flex;
  flex-direction: column;
  padding-left: 2px;
}
.doc-tabs {
  display: flex;
  gap: 6px;
  height: 36px;
  padding: 3px 0 3px 4px;
  border-bottom: 2px solid #bbb;
}
.doc-tabs button {
  display: flex;
  align-items: center;
  width: 126px;
  padding-left: 6px;
  gap: 6px;
  border: 1px solid #aaa;
  border-radius: 2px;
  background-color: #ededed;
  font-size: 13px;
}
.doc-tabs .active {
  background-color: #fff;
}
.doc-tabs svg {
  width: 18px;
  height: 16px;
  flex-shrink: 0;
}
.canvas-row {
  flex: 1;
  min-height: 0;
  display: flex;
}
.canvas {
  position: relative;
  flex: 1;
  min-width: 0;
  background-color: #000;
  border-bottom: 3px solid #777;
}
.board {
  display: block;
  width: 100%;
  height: 100%;
}
.keepout {
  fill: none;
  stroke: #f0f;
  stroke-width: 4;
}
.overlay {
  fill: none;
  stroke: #ff0;
  stroke-width: 3;
}
.overlay .thin {
  stroke-width: 2;
}
.overlay .dot {
  fill: #ff0;
  stroke: none;
}
.nets {
  fill: none;
  stroke: #8c8c6c;
}
.designators {
  fill: #ff0;
  stroke: #ff0;
  stroke-width: 1;
  font-family: "Liberation Mono", monospace;
  font-size: 39px;
}
.hud {
  position: absolute;
  left: 2px;
  top: 3px;
  width: 250px;
  height: 60px;
  padding: 4px;
  display: grid;
  grid-template-columns: 25px 82px 30px 74px 1fr;
  grid-auto-rows: 19px;
  background: linear-gradient(#000, #051620);
  color: #99967f;
  font-size: 16px;
  font-weight: bold;
  line-height: 19px;
}
.hud .num {
  text-align: right;
  padding-right: 7px;
}
.hud small {
  grid-column: 1 / -1;
  font-size: 13px;
  line-height: 15px;
}
.vscroll {
  width: 21px;
  display: flex;
  flex-direction: column;
  align-items: center;
  padding: 6px 0 4px;
}
.vscroll i {
  width: 19px;
  height: 21px;
  margin-top: auto;
  margin-bottom: 23px;
  background-color: #cdcdcd;
}
.vscroll svg,
.hscroll svg {
  width: 11px;
  height: 11px;
  fill: none;
  stroke: #555;
  stroke-width: 2;
}
.hscroll {
  display: flex;
  align-items: center;
  height: 21px;
  padding: 0 27px 0 5px;
}
.hscroll i {
  width: 21px;
  height: 19px;
  margin-left: 56px;
  margin-right: auto;
  background-color: #cdcdcd;
}

/* layer tabs */
.layer-bar {
  display: flex;
  height: 24px;
  border-top: 1px solid #999;
}
.layer-set {
  display: flex;
  align-items: center;
  width: 58px;
  height: 18px;
  margin: 3px 10px 0 4px;
  gap: 5px;
  border: 1px solid #888;
  color: #999;
  font-family: "Open Sans", sans-serif;
}
.layer-set i {
  width: 32px;
  height: 16px;
  background-color: #f0f;
  border-right: 1px solid #888;
}
.layers {
  position: relative;
  flex: 1;
  display: flex;
  min-width: 0;
  overflow: hidden;
}
.layers .tab {
  display: flex;
  align-items: center;
  gap: 5px;
  padding: 0 11px 0 7px;
}
.layers .active::after {
  background-color: #f0f0f0;
}
.layers .tab i {
  width: 12px;
  height: 12px;
  border: 1px solid #aaa;
}
.red {
  background-color: #f00;
}
.blue {
  background-color: #00f;
}
.magenta {
  background-color: #f0f;
}
.yellow {
  background-color: #ff0;
}
.olive {
  background-color: #808000;
}
.gray {
  background-color: #808080;
}
.maroon {
  background-color: #800000;
}
.purple {
  background-color: #800080;
}
.crimson {
  background-color: #ff0028;
}
.layer-steps {
  position: absolute;
  right: 2px;
  top: 3px;
  display: flex;
}
.layer-steps button {
  width: 15px;
  height: 16px;
  display: flex;
  align-items: center;
  justify-content: center;
  border: 1px solid #000;
  background-color: #c8c8c8;
}
.layer-steps svg {
  width: 11px;
  height: 11px;
  flex-shrink: 0;
}
.layer-steps [disabled] {
  fill: #888;
}
.mask {
  display: flex;
  align-items: center;
  justify-content: center;
  width: 43px;
  border: 1px solid #d5d5d5;
  color: #777;
  font-family: "Noto Sans CJK SC", sans-serif;
  font-size: 15px;
}
.mask.level {
  width: 81px;
}
.bulbs {
  width: 18px;
  height: 18px;
}
.funnel {
  width: 14px;
  height: 14px;
}
.pointer {
  position: absolute;
  right: 304px;
  bottom: 17px;
  width: 52px;
  height: 136px;
  overflow: visible;
}

.side-tabs {
  display: flex;
  flex-direction: column;
  align-items: center;
  gap: 4px;
  width: 35px;
}
.side-tabs button {
  writing-mode: vertical-rl;
  text-orientation: sideways;
  width: 25px;
  padding: 5px 0;
  border: 1px solid #ddd;
  background-color: #fafafa;
  color: #666;
  font-family: "Noto Sans CJK SC", sans-serif;
  font-size: 15px;
  line-height: 23px;
}

/* status bar */
.statusbar {
  display: flex;
  align-items: center;
  height: 30px;
  padding: 0 5px 1px 6px;
  border-top: 2px solid #6a6a6a;
  font-size: 13px;
  flex-shrink: 0;
  background: linear-gradient(#aaa, #aaa) 487px 4px / 1px 21px no-repeat,
    linear-gradient(#aaa, #aaa) 974px 4px / 1px 21px no-repeat;
}
.gridsize {
  margin-left: 15px;
}
.status-panels {
  display: flex;
  margin-left: auto;
}
.status-panels button,
.more {
  height: 23px;
  padding: 0 9px;
  border: 1px solid #ddd;
  border-left-width: 0;
  background-color: #fafafa;
  color: #666;
  font-size: 13px;
}
.status-panels .openbus {
  padding: 0 5px;
  font-size: 14px;
}
.status-panels button:last-child {
  padding: 0 14px;
}
.status-panels button:first-child,
.more {
  border-left-width: 1px;
}
.more {
  margin-left: 6px;
  padding: 0 3px;
}
```
